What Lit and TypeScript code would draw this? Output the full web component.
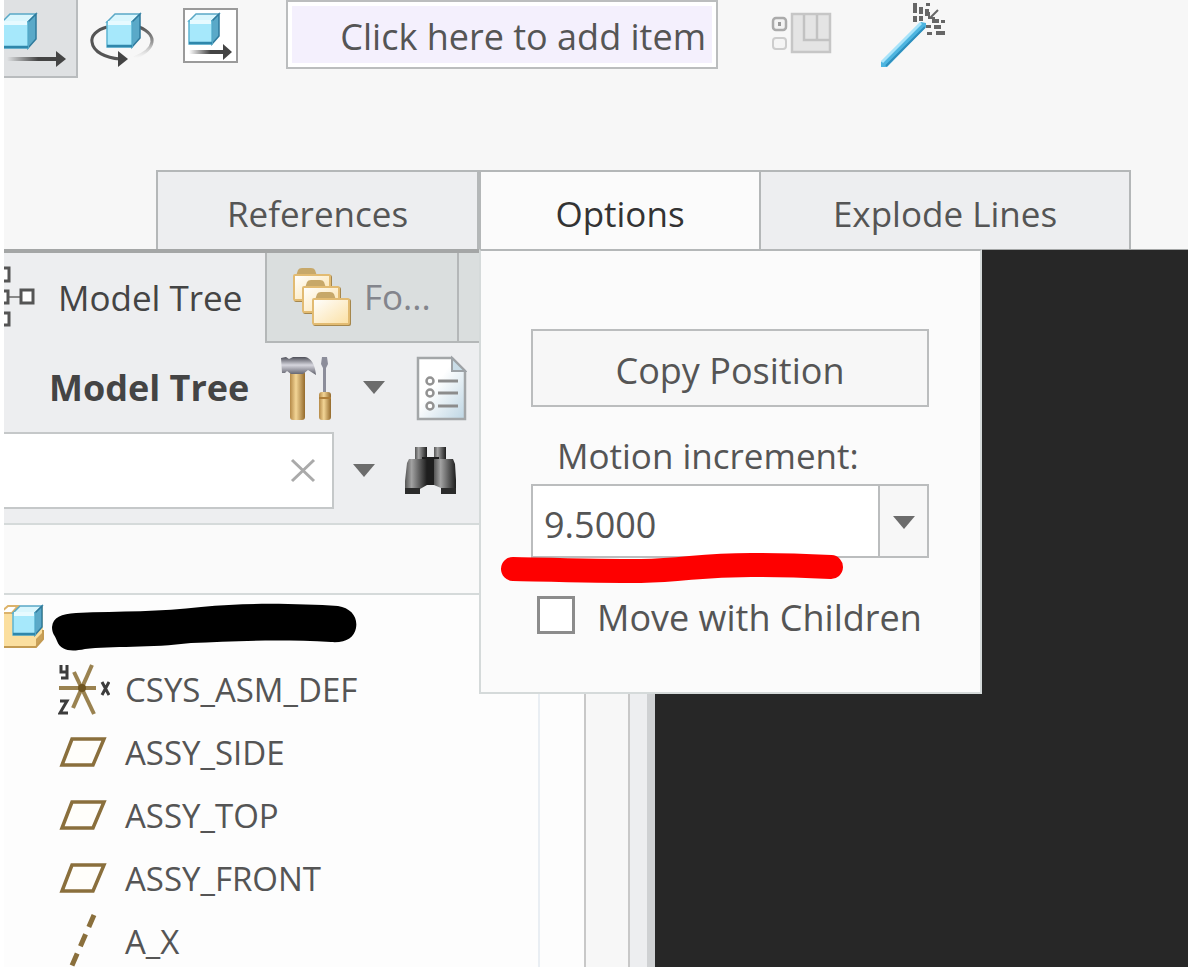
import { LitElement, html, svg, css } from "lit";
import { customElement, state } from "lit/decorators.js";

const cube = (x: number, y: number, s: number) => {
  const d = Math.round(s * 0.24);
  const f = s - d;
  return svg`
    <path d="M${x} ${y + d}L${x + d} ${y}H${x + s}L${x + f} ${y + d}Z" fill="#d9f6fd" stroke="#5aa8c6" stroke-width="1.5"/>
    <path d="M${x + f} ${y + d}L${x + s} ${y}V${y + f - 1}L${x + f} ${y + s}Z" fill="#5aa9c8" stroke="#2f7a9c" stroke-width="1.5"/>
    <path d="M${x} ${y + d}H${x + f}V${y + s}H${x}Z" fill="#a6e8fb" stroke="#5eb4d2" stroke-width="1.5"/>
    <path d="M${x} ${y + s - 1}H${x + f}" stroke="#2f87ab" stroke-width="2.5"/>
    <path d="M${x + 1} ${y + d + 1}H${x + f - 1}" stroke="#e6faff" stroke-width="4"/>`;
};

const moveIcon = html`<svg class="icon" width="72" height="76" viewBox="4 0 72 76" aria-hidden="true">
  <defs><linearGradient id="fadeA" x1="0" x2="1" y1="0" y2="0"><stop offset="0" stop-color="#444" stop-opacity="0"/><stop offset=".6" stop-color="#444"/></linearGradient></defs>
  ${cube(2, 14, 34)}
  <rect x="7" y="57" width="52" height="4" fill="url(#fadeA)"/>
  <path d="M56 51L66 59L56 67Z" fill="#444"/>
</svg>`;

const rotateIcon = html`<svg class="icon" width="68" height="78" viewBox="88 0 68 78" aria-hidden="true">
  <defs><linearGradient id="fadeB" x1="0" x2="0" y1="0" y2="1"><stop offset="0" stop-color="#555"/><stop offset=".5" stop-color="#999"/><stop offset="1" stop-color="#ccc" stop-opacity="0"/></linearGradient></defs>
  <path d="M107 27C96 30 91 36 92 42C93 52 106 58 120 59" fill="none" stroke="#555" stroke-width="3"/>
  <path d="M139 27C149 31 153 37 152 42C151 49 144 54 134 58" fill="none" stroke="url(#fadeB)" stroke-width="3"/>
  ${cube(107, 14, 33)}
  <path d="M118 51L128 59L118 67Z" fill="#444"/>
</svg>`;

const boxIcon = html`<svg class="icon" width="58" height="78" viewBox="182 0 58 78" aria-hidden="true">
  <defs><linearGradient id="fadeC" x1="0" x2="1" y1="0" y2="0"><stop offset="0" stop-color="#444" stop-opacity="0"/><stop offset=".6" stop-color="#444"/></linearGradient></defs>
  <rect x="184" y="9" width="53" height="53" fill="#fff" stroke="#9a9a9a" stroke-width="2"/>
  ${cube(189, 14, 30)}
  <rect x="189" y="50" width="36" height="4" fill="url(#fadeC)"/>
  <path d="M223 44L232 52L223 60Z" fill="#444"/>
</svg>`;

const explodedViewIcon = html`<svg class="icon" width="62" height="78" viewBox="770 0 62 78" aria-hidden="true">
  <rect x="773" y="18" width="13" height="12" rx="3" fill="#f3f3f3" stroke="#ababab" stroke-width="2.5"/>
  <rect x="778" y="22" width="3" height="4" fill="#9a9a9a"/>
  <rect x="773" y="38" width="13" height="11" rx="3" fill="#f5f5f5" stroke="#cdcdcd" stroke-width="2"/>
  <rect x="792" y="14" width="38" height="38" fill="#e4e4e4" stroke="#c6c6c6" stroke-width="2.5"/>
  <path d="M804 15V40H830M817 15V40" fill="none" stroke="#c2c2c2" stroke-width="2.5"/>
</svg>`;

const wandIcon = html`<svg class="icon" width="66" height="78" viewBox="880 0 66 78" aria-hidden="true">
  <path d="M881 62L921 22L926 23V27L887 67H881Z" fill="#4db5e0"/>
  <path d="M882 62L921 23" stroke="#a9e4fa" stroke-width="3"/>
  <path d="M886 66L925 27" stroke="#2d8fbd" stroke-width="2"/>
  <g fill="#666"><rect x="913" y="3" width="4" height="10"/><rect x="919" y="7" width="4" height="7"/><rect x="913" y="16" width="4" height="6"/><rect x="919" y="16" width="4" height="5"/>
  <rect x="926" y="3" width="4" height="3"/><rect x="925" y="9" width="4" height="7"/><rect x="932" y="19" width="7" height="4"/><rect x="941" y="20" width="4" height="3"/><rect x="926" y="25" width="5" height="3"/><rect x="934" y="25" width="7" height="4"/><rect x="927" y="32" width="5" height="3"/><rect x="936" y="31" width="9" height="4"/></g>
  <path d="M938 10L930 18M929 12V18H935" fill="none" stroke="#666" stroke-width="2"/>
</svg>`;

const treeIcon = html`<svg width="34" height="64" viewBox="4 265 34 64" aria-hidden="true">
  <path d="M9 296H20" stroke="#888" stroke-width="2"/>
  <g fill="#fff" stroke="#555" stroke-width="3">
  <rect x="-4" y="267" width="13" height="13"/><rect x="-4" y="290" width="12" height="12"/><rect x="-4" y="312" width="13" height="12"/><rect x="21" y="289" width="12" height="13"/></g>
</svg>`;

const folder = (x: number, y: number) => svg`
  <path d="M${x + 3} ${y + 8}L${x + 5} ${y + 2}Q${x + 6} ${y} ${x + 9} ${y}H${x + 18}Q${x + 21} ${y} ${x + 22} ${y + 2}L${x + 24} ${y + 8}Z" fill="#c7a869"/>
  <rect x="${x + 1}" y="${y + 7}" width="38" height="27" rx="2" fill="#a5874d"/>
  <rect x="${x + 1}" y="${y + 7}" width="36" height="25" rx="1" fill="url(#folderFill)" stroke="#e2bb72" stroke-width="2"/>`;

const foldersIcon = html`<svg width="62" height="64" viewBox="290 267 62 64" aria-hidden="true">
  <defs><linearGradient id="folderFill" x1="0" y1="0" x2="1" y2="1"><stop offset="0" stop-color="#fff"/><stop offset="1" stop-color="#fbe0a4"/></linearGradient></defs>
  ${folder(292, 270)}${folder(301, 282)}${folder(311, 294)}
</svg>`;

const toolsIcon = html`<svg width="54" height="66" viewBox="280 354 54 66" aria-hidden="true">
  <defs><linearGradient id="wood" x1="0" x2="1"><stop offset="0" stop-color="#b58a48"/><stop offset=".4" stop-color="#f3d596"/><stop offset="1" stop-color="#946a2c"/></linearGradient>
  <linearGradient id="steel" x1="0" x2="0" y1="0" y2="1"><stop offset="0" stop-color="#4d4e58"/><stop offset=".45" stop-color="#d6d6de"/><stop offset="1" stop-color="#5a5b66"/></linearGradient></defs>
  <rect x="290" y="370" width="15" height="49" rx="3" fill="url(#wood)"/>
  <path d="M281 357L286 356L289 358L293 356H305C311 357 315 363 316 374L308 369L303 373H291L287 370L285 372H282Z" fill="url(#steel)"/>
  <path d="M322 356H327L328 363L326 367V391H323V367L321 363Z" fill="#8c8d9a"/>
  <rect x="319" y="391" width="12" height="28" rx="3" fill="url(#wood)"/>
  <path d="M319 397H331" stroke="#b07f39" stroke-width="2"/>
</svg>`;

const listIcon = html`<svg width="52" height="66" viewBox="415 354 52 66" aria-hidden="true">
  <defs><linearGradient id="paper" x1="0" y1="0" x2="1" y2="1"><stop offset=".4" stop-color="#fff"/><stop offset="1" stop-color="#bdd5e3"/></linearGradient></defs>
  <path d="M418 357H452L465 370V418H418Z" fill="url(#paper)" stroke="#a3a6a8" stroke-width="2.5"/>
  <path d="M452 357V370H465Z" fill="#c9dce7" stroke="#9da2a6" stroke-width="2"/>
  <g fill="#fff" stroke="#929292" stroke-width="2.5"><circle cx="430" cy="380" r="3.5"/><circle cx="430" cy="392" r="3.5"/><circle cx="430" cy="405" r="3.5"/></g>
  <path d="M438 380H458M438 392H458M438 405H458" stroke="#8c8c8c" stroke-width="3"/>
</svg>`;

const binocularsIcon = html`<svg width="52" height="52" viewBox="405 445 52 52" aria-hidden="true">
  <defs><linearGradient id="tube" x1="0" x2="1"><stop offset="0" stop-color="#555"/><stop offset=".3" stop-color="#a2a2a2"/><stop offset="1" stop-color="#1d1d1d"/></linearGradient></defs>
  <rect x="415" y="447" width="12" height="14" fill="url(#tube)"/><rect x="434" y="447" width="12" height="14" fill="url(#tube)"/>
  <rect x="422" y="457" width="17" height="28" fill="#1e1e1e"/>
  <path d="M409 459H427V485L420 489V494H405V481L407 463Z" fill="url(#tube)"/>
  <path d="M434 459H453L455 464L456 480V494H441V488L434 485Z" fill="url(#tube)"/>
  <path d="M405 488H420V494H405ZM441 488H456V494H441Z" fill="#2b2b2b"/>
</svg>`;

const assemblyIcon = html`<svg width="42" height="48" viewBox="4 603 42 48" aria-hidden="true">
  <path d="M-4 613L7 606H43V639L36 647H-4Z" fill="#fbdf9f"/>
  <path d="M36 639L43 632V639L36 647Z" fill="#c9a15a"/>
  <path d="M0 613L8 606H18L12 613Z" fill="#fff" stroke="#dcb36b" stroke-width="2"/>
  <path d="M0 647H36L43 639V630" fill="none" stroke="#c49b52" stroke-width="2"/>
  ${cube(13, 606, 29)}
</svg>`;

const redaction = html`<svg width="306" height="48" viewBox="50 603 306 48" aria-hidden="true">
  <path d="M51 627C52 617 60 614 75 613C120 611 160 612 200 607C250 602 300 604 337 606C350 608 357 617 355 628C353 638 345 643 330 642C280 639 230 641 190 643C150 648 110 646 84 649C70 652 60 651 56 641C54 635 51 634 51 627Z" fill="#000"/>
</svg>`;

const csysIcon = html`<svg width="52" height="52" viewBox="58 664 52 52" aria-hidden="true">
  <g fill="none" stroke="#9a8250" stroke-width="4"><path d="M59 688H96"/><path d="M92 665L73 708"/><path d="M74 672L94 714"/></g>
  <circle cx="82" cy="688" r="4" fill="#6f5520"/>
  <g fill="none" stroke="#3c3c3c" stroke-width="3"><path d="M61 665V672H67M67 665V678H61"/><path d="M60 701H67L60 713H68"/><path d="M102 682L109 695M109 682L102 695"/></g>
</svg>`;

const planeIcon = html`<svg width="52" height="36" viewBox="58 734 52 36" aria-hidden="true">
  <path d="M72 738H104L93 764H62Z" fill="#fffefa" stroke="#8a6f3c" stroke-width="3.5"/>
</svg>`;

const axisIcon = html`<svg width="52" height="60" viewBox="58 913 52 60" aria-hidden="true">
  <path d="M94 916L70 971" stroke="#8a6f3c" stroke-width="5" stroke-dasharray="13 8"/>
</svg>`;

const arrow = html`<svg width="22" height="14" viewBox="0 0 22 14" aria-hidden="true"><path d="M0 0H22L11 13Z" fill="#6c6c6c"/></svg>`;

const rows = [
  { icon: csysIcon, name: "CSYS_ASM_DEF" },
  { icon: planeIcon, name: "ASSY_SIDE" },
  { icon: planeIcon, name: "ASSY_TOP" },
  { icon: planeIcon, name: "ASSY_FRONT" },
  { icon: axisIcon, name: "A_X" },
];

@customElement("app-root")
export class AppRoot extends LitElement {
  @state() private increment = "9.5000";

  static styles = css`
    :host {
      display: flex;
      flex-direction: column;
      height: 100vh;
      overflow: hidden;
      box-sizing: border-box;
      padding-left: 4px;
      background: #fff;
      color: #555;
      font-family: "Open Sans", "Noto Sans", sans-serif;
      font-size: 36px;
      line-height: 48px;
    }
    * { box-sizing: border-box; }
    button, input { font: inherit; color: inherit; margin: 0; padding: 0; border: 0; border-radius: 0; background: none; }
    svg { display: block; flex: none; }
    .ribbon { flex: none; background: #f7f7f7; }
    .toolbar { display: flex; align-items: flex-start; height: 78px; }
    .move { border: solid #b9bcbe; border-width: 0 2px 2px 0; background: #dfe1e3; margin-right: 10px; }
    .rotate { margin-right: 26px; }
    .boxed { margin-right: 46px; }
    .collector { width: 432px; height: 69px; border: 2px solid #bbbdbe; background: #fff; padding: 4px; margin-right: 52px; }
    .hint { display: block; height: 57px; line-height: 61px; padding-right: 6px; background: #f4f0fd; text-align: right; white-space: nowrap; }
    .exploded { margin-right: 48px; }
    .tabs { display: flex; padding: 92px 0 0 152px; border-bottom: 1px solid #a4a6a6; }
    .slot { position: relative; display: flex; }
    .tab { height: 79px; border: 2px solid #b4b7b8; border-bottom: 0; background: #edeef0; padding-top: 6px; white-space: nowrap; font-size: 35px; }
    .tab-references { width: 323px; }
    .tab-options { width: 282px; background: #fbfbfb; color: #333; }
    .tab-lines { width: 370px; border-left: 0; }
    .popup {
      position: absolute;
      z-index: 2;
      top: 100%;
      left: 0;
      width: 503px;
      display: flex;
      flex-direction: column;
      padding: 78px 51px 50px 50px;
      background: #fbfbfb;
      border: 2px solid #d5dada;
      border-top-color: #b4b7b8;
    }
    .copy { height: 78px; border: 2px solid #bbbdbe; background: #f7f7f7; padding-top: 6px; }
    .label { margin: 25px 0 4px 26px; font-size: 35px; }
    .combo { display: flex; height: 74px; border: 2px solid #bbbdbe; background: #fff; }
    .value { flex: 1; min-width: 0; padding: 8px 0 0 11px; }
    .drop { display: flex; align-items: center; justify-content: center; width: 49px; border-left: 2px solid #bbbdbe; background: #f7f7f7; padding-top: 3px; }
    .marker { position: absolute; top: 298px; left: 18px; }
    .check { display: flex; align-items: center; gap: 22px; margin: 36px 0 0 6px; white-space: nowrap; }
    .box { appearance: none; flex: none; width: 38px; height: 38px; margin-bottom: 6px; border: 3px solid #8c8c8c; background: #fff; }
    .work { display: flex; flex: 1; min-height: 0; }
    .panel { display: flex; flex: none; width: 651px; border-top: 3px solid #a4a6a6; }
    .browser { display: flex; flex-direction: column; flex: 1; min-width: 0; background: #edeef0; }
    .panel-tabs { display: flex; flex: none; height: 90px; font-size: 35px; }
    .panel-tab { display: flex; align-items: center; width: 261px; gap: 20px; color: #444; white-space: nowrap; }
    .folder-tab { width: 192px; gap: 11px; padding-left: 24px; border: solid #b4b7b8; border-width: 0 0 2px 2px; background: #dadede; color: #83858c; }
    .rest-tab { flex: 1; border: solid #b4b7b8; border-width: 0 0 2px 2px; background: #dadede; }
    .heading { display: flex; align-items: center; flex: none; height: 89px; padding-left: 45px; }
    .title { width: 231px; margin: 0; font-size: 36px; line-height: 48px; font-weight: 700; color: #444; white-space: nowrap; }
    .menu { display: flex; margin: 0 30px 0 29px; }
    .search { display: flex; align-items: center; flex: none; height: 77px; }
    .field { display: flex; align-items: center; width: 330px; height: 77px; border: solid #c5c8c9; border-width: 2px 2px 2px 0; background: #fff; }
    .query { flex: 1; min-width: 0; height: 100%; padding-left: 12px; }
    .clear { padding-right: 15px; }
    .search-menu { margin: 0 30px 0 19px; }
    .columns { flex: none; height: 72px; margin-top: 14px; border: solid #d5dada; border-width: 2px 0; background: #fafafa; }
    .tree { flex: 1; min-height: 0; margin: 0; padding: 0; list-style: none; overflow: hidden; background: linear-gradient(90deg, #fdfdfd 534px, #e9eef3 534px, #e9eef3 536px, #fdfdfd 536px); font-size: 33px; }
    .row { display: flex; align-items: center; height: 63px; padding-left: 54px; gap: 15px; }
    .root { padding-left: 0; gap: 5px; }
    .scroll { width: 46px; border: solid #c8c8c8; border-width: 0 2px; background: #f7f7f7; }
    .gutter { width: 17px; background: #edeef0; }
    .splitter { width: 8px; background: #cfd1d3; }
    .viewport { flex: 1; background: #272727; }
  `;

  render() {
    return html`
      <header class="ribbon">
        <div class="toolbar">
          <button class="move" aria-label="Translate">${moveIcon}</button>
          <button class="rotate" aria-label="Rotate">${rotateIcon}</button>
          <button class="boxed" aria-label="View plane">${boxIcon}</button>
          <button class="collector"><span class="hint">Click here to add item</span></button>
          <button class="exploded" aria-label="Toggle explode" disabled>${explodedViewIcon}</button>
          <button aria-label="Create explode line">${wandIcon}</button>
        </div>
        <nav class="tabs">
          <button class="tab tab-references">References</button>
          <div class="slot">
            <button class="tab tab-options" aria-expanded="true">Options</button>
            <section class="popup">
              <button class="copy">Copy Position</button>
              <label class="label" for="increment">Motion increment:</label>
              <div class="combo">
                <input id="increment" class="value" .value=${this.increment}
                  @input=${(e: Event) => (this.increment = (e.target as HTMLInputElement).value)} />
                <button class="drop" aria-label="Show increments">${arrow}</button>
              </div>
              <label class="check"><input class="box" type="checkbox" />Move with Children</label>
              <svg class="marker" width="346" height="36" viewBox="498 549 346 36" aria-hidden="true">
                <path d="M512 569C560 570 600 571 640 571C690 570 700 564 760 565C790 565 810 566 830 567" fill="none" stroke="#fe0000" stroke-width="24" stroke-linecap="round"/>
              </svg>
            </section>
          </div>
          <button class="tab tab-lines">Explode Lines</button>
        </nav>
      </header>
      <main class="work">
        <aside class="panel">
          <div class="browser">
            <div class="panel-tabs">
              <button class="panel-tab">${treeIcon}Model Tree</button>
              <button class="panel-tab folder-tab">${foldersIcon}Fo...</button>
              <div class="rest-tab"></div>
            </div>
            <div class="heading">
              <h2 class="title">Model Tree</h2>
              <button aria-label="Settings">${toolsIcon}</button>
              <button class="menu" aria-label="Settings menu">${arrow}</button>
              <button aria-label="Show">${listIcon}</button>
            </div>
            <div class="search">
              <div class="field">
                <input class="query" aria-label="Search tree" />
                <button class="clear" aria-label="Clear search">
                  <svg width="28" height="26" viewBox="0 0 28 26" aria-hidden="true"><path d="M3 2L25 23M25 2L3 23" stroke="#aaa" stroke-width="3"/></svg>
                </button>
              </div>
              <button class="search-menu" aria-label="Search options">${arrow}</button>
              <button aria-label="Find">${binocularsIcon}</button>
            </div>
            <div class="columns"></div>
            <ul class="tree">
              <li class="row root">${assemblyIcon}${redaction}</li>
              ${rows.map((r) => html`<li class="row">${r.icon}<span>${r.name}</span></li>`)}
            </ul>
          </div>
          <div class="scroll"></div>
          <div class="gutter"></div>
          <div class="splitter"></div>
        </aside>
        <div class="viewport"></div>
      </main>
    `;
  }
}
